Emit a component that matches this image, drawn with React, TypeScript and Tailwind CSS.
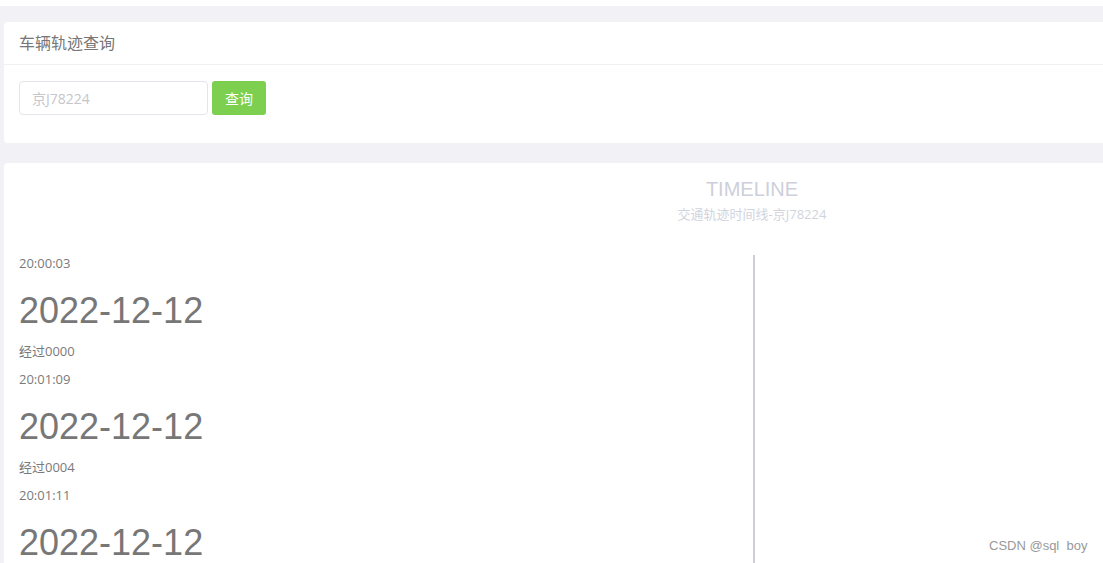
import React from 'react'

type TrackPoint = {
  time: string
  date: string
  place: string
}

const points: TrackPoint[] = [
  { time: '20:00:03', date: '2022-12-12', place: '经过0000' },
  { time: '20:01:09', date: '2022-12-12', place: '经过0004' },
  { time: '20:01:11', date: '2022-12-12', place: '经过0008' },
]

const cjk = "font-['Open_Sans','Noto_Sans_CJK_SC',sans-serif]"

const SearchCard = () => (
  <div className="ml-1 w-[1496px] rounded bg-white">
    <div className="flex h-[43px] items-center border-b border-[#f0f0f3] px-[15px]">
      <span className={`${cjk} text-[16px] text-[#767676]`}>车辆轨迹查询</span>
    </div>
    <div className="flex items-center gap-1 px-[15px] pb-[28px] pt-[16px]">
      <input
        className={`${cjk} h-[34px] w-[189px] rounded border border-[#e3e5ea] px-[12px] text-[14px] text-[#606266] outline-none placeholder:text-[#c4c6cc]`}
        placeholder="京J78224"
      />
      <button
        type="button"
        className={`${cjk} h-[34px] w-[54px] rounded-[3px] bg-[#7ccf4f] text-[14px] text-white`}
      >
        查询
      </button>
    </div>
  </div>
)

const Timeline = () => (
  <div className="ml-1 w-[1496px] rounded bg-white pt-[14px]">
    <div className="flex flex-col items-center">
      <span className="font-['Liberation_Sans',sans-serif] text-[20px] leading-[24px] text-[#cdd0da]">
        TIMELINE
      </span>
      <span className={`${cjk} mt-[4px] text-[13px] leading-[18px] text-[#d2d4dc]`}>
        交通轨迹时间线-京J78224
      </span>
    </div>
    <div className="relative mt-[31px] px-[15px]">
      <div className="absolute bottom-0 left-[749px] top-[1px] w-[2px] bg-[#cbced8]" />
      {points.map((p, i) => (
        <div key={i} className="pb-[10px]">
          <div className={`${cjk} text-[13px] leading-[18px] text-[#7a7a7a]`}>{p.time}</div>
          <div className="mt-[15px] font-['Liberation_Sans',sans-serif] text-[36px] leading-[48px] text-[#777]">
            {p.date}
          </div>
          <div className={`${cjk} mt-[7px] text-[13px] leading-[18px] text-[#7a7a7a]`}>{p.place}</div>
        </div>
      ))}
    </div>
  </div>
)

export default function App() {
  return (
    <div className="relative h-[563px] w-[1103px] overflow-hidden bg-[#f1f1f6]">
      <div className="h-[6px] bg-white" />
      <div className="mt-[16px]">
        <SearchCard />
      </div>
      <div className="mt-[20px]">
        <Timeline />
      </div>
      <span className="absolute left-[989px] top-[537px] font-['Liberation_Sans',sans-serif] text-[13px] leading-[18px] text-[#999] whitespace-pre">
        CSDN @sql  boy
      </span>
    </div>
  )
}
